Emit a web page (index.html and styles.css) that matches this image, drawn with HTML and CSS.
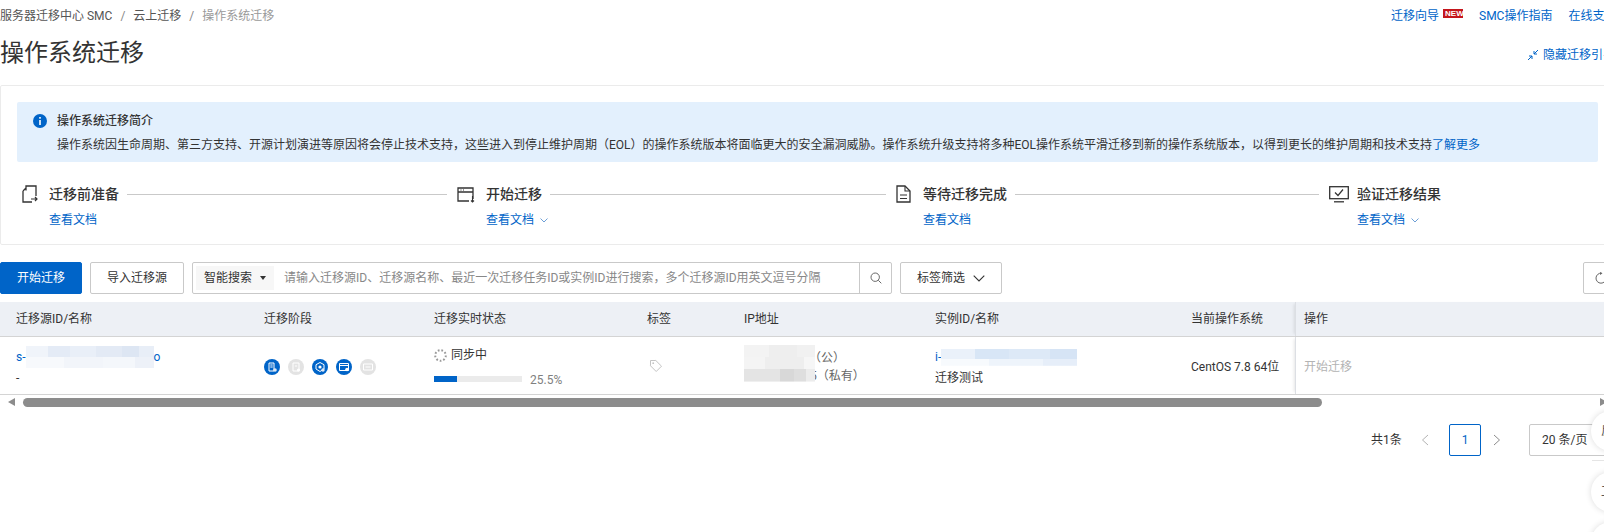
FILE: index.html
```html
<!DOCTYPE html>
<html lang="zh-CN">
<head>
<meta charset="utf-8">
<title>操作系统迁移</title>
<link rel="stylesheet" href="styles.css">
</head>
<body>
<div class="page">
  <header class="topbar">
    <nav class="crumbs"><span>服务器迁移中心 SMC</span><i>/</i><span>云上迁移</span><i>/</i><span class="cur">操作系统迁移</span></nav>
    <div class="toplinks">
      <a class="wizard">迁移向导</a><b class="new">NEW</b>
      <a class="guide">SMC操作指南</a>
      <a class="support">在线支持</a>
    </div>
  </header>
  <div class="titlebar">
    <h1>操作系统迁移</h1>
    <a class="hideguide">
      <svg class="collapse" viewBox="0 0 12 12" width="12" height="12"><path d="M1 11l4-4M2 7h3v3M11 1L7 5M7 2v3h3" fill="none" stroke="#0064c8" stroke-width="1"/></svg>隐藏迁移引导
    </a>
  </div>

  <section class="card">
    <div class="alert">
      <svg class="info" viewBox="0 0 14 14" width="14" height="14"><circle cx="7" cy="7" r="7" fill="#0064c8"/><rect x="6.2" y="6" width="1.6" height="5" fill="#fff"/><rect x="6.2" y="3" width="1.6" height="1.7" fill="#fff"/></svg>
      <div>
        <div class="alert-title">操作系统迁移简介</div>
        <p>操作系统因生命周期、第三方支持、开源计划演进等原因将会停止技术支持，这些进入到停止维护周期（EOL）的操作系统版本将面临更大的安全漏洞威胁。操作系统升级支持将多种EOL操作系统平滑迁移到新的操作系统版本，以得到更长的维护周期和技术支持<a>了解更多</a></p>
      </div>
    </div>
    <div class="steps">
      <div class="step s1">
        <div class="step-head">
          <svg class="step-icon" viewBox="0 0 16 18" width="16" height="18"><path d="M4 5.5V1h10v10M1 6l3-3M1 6v11h9" fill="none" stroke="#333" stroke-width="1.3"/><path d="M9 14h6M13 12l2 2-2 2" fill="none" stroke="#333" stroke-width="1.2"/></svg>
          <strong>迁移前准备</strong><span class="rule"></span>
        </div>
        <a class="doc">查看文档</a>
      </div>
      <div class="step s2">
        <div class="step-head">
          <svg class="step-icon" viewBox="0 0 19 17" width="19" height="17"><path d="M16 13V2H1v13h11M1 6h15" fill="none" stroke="#333" stroke-width="1.3"/><path d="M3.5 4h1M6 4h1M15.5 10v6M14 14.5l1.5 1.5 1.5-1.5" fill="none" stroke="#333" stroke-width="1.1"/></svg>
          <strong>开始迁移</strong><span class="rule"></span>
        </div>
        <a class="doc">查看文档<svg class="chev" viewBox="0 0 8 5" width="8" height="5"><path d="M.5.5L4 4 7.500.5" fill="none" stroke="#6e9fd6"/></svg></a>
      </div>
      <div class="step s3">
        <div class="step-head">
          <svg class="step-icon" viewBox="0 0 15 18" width="15" height="18"><path d="M1 1h8l5 5v11H1z" fill="none" stroke="#333" stroke-width="1.3"/><path d="M9 1v5h5M4 10h7M4 13.500h7" fill="none" stroke="#333" stroke-width="1.1"/></svg>
          <strong>等待迁移完成</strong><span class="rule"></span>
        </div>
        <a class="doc">查看文档</a>
      </div>
      <div class="step s4">
        <div class="step-head">
          <svg class="step-icon" viewBox="0 0 20 17" width="20" height="17"><rect x=".7" y=".7" width="18.600" height="12" fill="none" stroke="#333" stroke-width="1.300"/><path d="M6 6.500l3 3 5-6" fill="none" stroke="#333" stroke-width="1.200"/><path d="M5 15.800h10" stroke="#333" stroke-width="1.300"/></svg>
          <strong>验证迁移结果</strong>
        </div>
        <a class="doc">查看文档<svg class="chev" viewBox="0 0 8 5" width="8" height="5"><path d="M.5.5L4 4 7.500.5" fill="none" stroke="#6e9fd6"/></svg></a>
      </div>
    </div>
  </section>

  <div class="toolbar">
    <button class="btn primary">开始迁移</button>
    <button class="btn import">导入迁移源</button>
    <div class="search">
      <div class="scope">智能搜索<span class="caret"></span></div>
      <div class="placeholder">请输入迁移源ID、迁移源名称、最近一次迁移任务ID或实例ID进行搜索，多个迁移源ID用英文逗号分隔</div>
      <div class="search-btn"><svg viewBox="0 0 12 12" width="12" height="12"><circle cx="5.200" cy="5.200" r="4.200" fill="none" stroke="#666"/><path d="M8.300 8.300l3 3" stroke="#666"/></svg></div>
    </div>
    <button class="btn tagfilter">标签筛选<svg viewBox="0 0 12 7" width="12" height="7"><path d="M.7.700L6 6l5.300-5.300" fill="none" stroke="#333" stroke-width="1.100"/></svg></button>
    <button class="btn refresh"><svg viewBox="0 0 12 12" width="12" height="12"><path d="M6.500 1.200A5 5 0 1 0 11 6" fill="none" stroke="#666"/><path d="M5 0l2.500 1.200L5 3" fill="#666"/></svg></button>
  </div>

  <div class="table">
    <div class="tr thead">
      <div class="c c-id">迁移源ID/名称</div>
      <div class="c c-stage">迁移阶段</div>
      <div class="c c-status">迁移实时状态</div>
      <div class="c c-tag">标签</div>
      <div class="c c-ip">IP地址</div>
      <div class="c c-inst">实例ID/名称</div>
      <div class="c c-os">当前操作系统</div>
      <div class="c c-op">操作</div>
    </div>
    <div class="tr tbody">
      <div class="c c-id">
        <div class="masked"><a>s-</a><span class="mosaic m-id"></span><a>o</a></div>
        <div class="sub">-</div>
      </div>
      <div class="c c-stage">
        <div class="stages">
          <span class="stage on"><svg viewBox="0 0 16 16"><path d="M5 4h5v8H5zM6.300 6h2.400M6.300 8h2.400" fill="none" stroke="#fff"/><circle cx="11" cy="11" r="1.800" fill="#dfe9f5"/></svg></span>
          <span class="stage"><svg viewBox="0 0 16 16"><path d="M5 4h6v8H5zM6.800 7h2.400" fill="none" stroke="#fff"/><circle cx="10.500" cy="11" r="1.600" fill="#fff"/></svg></span>
          <span class="stage on"><svg viewBox="0 0 16 16"><path d="M8 3.500l4 2.200v4.300L8 12.500 4 10V5.700z" fill="none" stroke="#fff"/><circle cx="8" cy="8" r="1.600" fill="#fff"/><circle cx="11" cy="11" r="1.700" fill="#dfe9f5"/></svg></span>
          <span class="stage on"><svg viewBox="0 0 16 16"><path d="M3.500 4.500h9v7h-9zM3.500 6.500h9" fill="none" stroke="#fff"/><circle cx="11" cy="10.500" r="1.800" fill="#fff"/></svg></span>
          <span class="stage"><svg viewBox="0 0 16 16"><path d="M3.500 5h9v6h-9zM5.500 8h5" fill="none" stroke="#fff"/></svg></span>
        </div>
      </div>
      <div class="c c-status">
        <div class="sync"><svg class="spin" viewBox="0 0 13 13" width="13" height="13"><circle cx="6.500" cy="6.500" r="5.300" fill="none" stroke="#999" stroke-width="2" stroke-dasharray="1.700 1.900"/></svg>同步中</div>
        <div class="progress"><span class="track"><span class="fill"></span></span><span class="pct">25.5%</span></div>
      </div>
      <div class="c c-tag"><svg viewBox="0 0 14 14" width="14" height="14"><path d="M1.500 1.500h5.300l5.700 5.700-5.300 5.300-5.700-5.700z" fill="none" stroke="#c4c4c4"/><circle cx="4.200" cy="4.200" r=".9" fill="#c4c4c4"/></svg></div>
      <div class="c c-ip">
        <div class="ip pub">（公）</div>
        <div class="ip pri">5（私有）</div>
        <span class="mosaic m-ip"></span>
      </div>
      <div class="c c-inst">
        <div class="masked"><a>i-</a><span class="mosaic m-inst"></span></div>
        <div class="sub">迁移测试</div>
      </div>
      <div class="c c-os">CentOS 7.8 64位</div>
      <div class="c c-op"><span class="disabled">开始迁移</span></div>
    </div>
  </div>

  <div class="scrollbar">
    <span class="arrow left"></span>
    <span class="thumb"></span>
    <span class="arrow right"></span>
  </div>

  <div class="pager">
    <span class="total">共1条</span>
    <svg class="pg-arrow" viewBox="0 0 8 12" width="8" height="12"><path d="M7 1L1.500 6 7 11" fill="none" stroke="#b3b3b3"/></svg>
    <span class="pg-cur">1</span>
    <svg class="pg-arrow" viewBox="0 0 8 12" width="8" height="12"><path d="M1 1l5.500 5L1 11" fill="none" stroke="#8c8c8c"/></svg>
    <span class="pg-size">20 条/页</span>
  </div>
</div>
<div class="float f1"><span>反馈</span></div>
<div class="float f2"><span>工单</span></div>
<div class="float f3"></div>
<span class="float-rule"></span>
</body>
</html>
```
FILE: styles.css
```css
* { box-sizing: border-box; }
html, body { margin: 0; height: 532px; overflow: hidden; background: #fff; }
body {
  position: relative;
  font: 12px/18px Roboto, "Noto Sans CJK SC", sans-serif;
  color: #333;
}
a { color: #0064c8; }
.page { width: 1660px; }

.topbar { display: flex; align-items: center; height: 32px; }
.crumbs { display: flex; color: #555; }
.crumbs i { font-style: normal; color: #888; margin: 0 8px; }
.crumbs .cur { color: #999; }
.toplinks { display: flex; align-items: center; margin-left: 1391px; position: absolute; left: 0; top: 7px; white-space: nowrap; }
.toplinks .new { font: bold 8px/9px "Liberation Sans", sans-serif; color: #fff; background: #c4161c; padding: 0 2px; margin: -6px 0 0 4px; width: 20px; height: 9px; text-align: center; }
.guide { margin-left: 16px; }
.support { margin-left: 16px; }

.titlebar { display: flex; align-items: center; justify-content: space-between; margin-top: 5px; height: 32px; width: 1604px; }
h1 { margin: 0; font-size: 24px; line-height: 32px; font-weight: 400; color: #333; }
.hideguide { display: flex; align-items: center; gap: 4px; position: absolute; left: 1527px; top: 46px; white-space: nowrap; }

.card { margin-top: 16px; width: 1640px; height: 160px; border: 1px solid #ebebeb; border-radius: 2px; padding: 16px 0 0 16px; }
.alert { display: flex; gap: 10px; width: 1581px; height: 60px; background: #e3f0fd; border-radius: 2px; padding: 10px 16px; }
.alert .info { flex: none; margin-top: 2px; }
.alert-title { font-weight: 500; line-height: 18px; }
.alert p { margin: 6px 0 0; line-height: 18px; white-space: nowrap; }

.steps { display: flex; margin: 22px 0 0 5px; }
.step { flex: none; }
.s1 { width: 435px; }
.s2 { width: 439px; }
.s3 { width: 433px; }
.s4 { width: 300px; }
.step-head { display: flex; align-items: center; height: 20px; }
.step-icon { flex: none; }
.step-head strong { font-size: 14px; font-weight: 500; white-space: nowrap; color: #333; }
.s1 .step-icon { margin-right: 11px; }
.s2 .step-icon { margin-right: 10px; }
.s3 .step-icon { margin-right: 12px; }
.s4 .step-icon { margin-right: 8px; }
.rule { flex: 1; height: 1px; background: #c9c9c9; margin: 0 10px 0 8px; }
.doc { display: flex; align-items: center; gap: 6px; margin-top: 7px; }
.s1 .doc { margin-left: 27px; }
.s2 .doc { margin-left: 29px; }
.s3 .doc { margin-left: 27px; }
.s4 .doc { margin-left: 28px; }

.toolbar { display: flex; margin-top: 17px; height: 32px; }
.btn { display: flex; align-items: center; justify-content: center; height: 32px; border: 1px solid #c9c9c9; background: #fff; border-radius: 2px; font: inherit; color: #333; padding: 0; }
.primary { width: 82px; background: #0064c8; border-color: #0064c8; color: #fff; }
.import { width: 94px; margin-left: 8px; }
.search { display: flex; align-items: center; width: 700px; margin-left: 8px; border: 1px solid #c9c9c9; border-radius: 2px; padding-left: 3px; }
.scope { display: flex; align-items: center; justify-content: center; gap: 8px; width: 78px; height: 24px; background: #f7f7f7; }
.caret { border: 3.500px solid transparent; border-top: 4px solid #333; border-bottom: 0; }
.placeholder { flex: 1; padding-left: 10px; color: #888; white-space: nowrap; }
.search-btn { display: flex; align-items: center; justify-content: center; width: 32px; height: 100%; border-left: 1px solid #c9c9c9; }
.tagfilter { width: 102px; margin-left: 8px; gap: 8px; }
.refresh { width: 40px; margin-left: 581px; justify-content: flex-start; padding-left: 11px; }

.table { margin-top: 8px; width: 1640px; }
.tr { display: flex; }
.thead { height: 35px; background: #edf0f5; border-bottom: 1px solid #d4d4d4; align-items: center; }
.tbody { height: 58px; border-bottom: 1px solid #d4d4d4; align-items: stretch; }
.c { flex: none; padding-left: 16px; }
.c-id { width: 264px; }
.c-stage { width: 170px; padding-left: 0; }
.c-status { width: 213px; padding-left: 0; }
.c-tag { width: 97px; padding-left: 0; }
.c-ip { width: 191px; padding-left: 0; position: relative; }
.c-inst { width: 256px; padding-left: 0; }
.c-os { width: 104px; padding-left: 0; }
.c-op { flex: 1; padding-left: 8px; border-left: 1px solid #dcdfe4; box-shadow: -3px 0 3px -2px rgba(0,0,0,.1); }
.thead .c-op { height: 100%; display: flex; align-items: center; }

.tbody .c-id, .tbody .c-inst { padding-top: 10px; }
.masked { display: flex; align-items: center; height: 20px; color: #0064c8; }
.sub { line-height: 22px; }
.mosaic { display: block; }
.m-id {
  width: 128px; height: 22px;
  background:
    linear-gradient(90deg, #f0f4fa 0 17%, #e4ebf6 17% 34%, #e9eff8 34% 55%, #e3eaf5 55% 75%, #dde6f3 75% 88%, #e8eef7 88%) top / 100% 50% no-repeat,
    linear-gradient(90deg, #f7f9fc 0 30%, #f2f5fa 30% 60%, #f4f7fb 60% 85%, #edf1f8 85%) bottom / 100% 50% no-repeat;
}
.m-inst {
  width: 136px; height: 17px;
  background:
    linear-gradient(90deg, #eaf1fa 0 25%, #d8e6f6 25% 50%, #dde9f7 50% 80%, #d6e4f5 80%) top / 100% 60% no-repeat,
    linear-gradient(90deg, #f7fafd 0 35%, #eef4fb 35% 75%, #e6eef9 75%) bottom / 100% 40% no-repeat;
}
.m-ip {
  position: absolute; left: 0; top: 8px; width: 71px; height: 37px;
  background:
    linear-gradient(90deg, #f3f3f3 0 35%, #eeeeee 35% 75%, #f1f1f1 75%) top / 100% 33% no-repeat,
    linear-gradient(90deg, #f4f4f4 0 30%, #eeeeee 30% 85%, #f6f6f6 85%) center / 100% 33% no-repeat,
    linear-gradient(90deg, #e4e4e4 0 50%, #d8d8d8 50% 70%, #dedede 70% 88%, #ececec 88%) bottom / 100% 34% no-repeat;
}
.ip { position: absolute; white-space: nowrap; color: #666; }
.pub { top: 12px; left: 65px; }
.pri { top: 30px; left: 66px; }

.stages { display: flex; gap: 8px; margin: 22px 0 0; }
.stage { display: block; width: 16px; height: 16px; border-radius: 50%; background: #e3e3e3; }
.stage.on { background: #0064c8; }
.stage svg { display: block; width: 16px; height: 16px; }

.sync { display: flex; align-items: center; gap: 4px; margin-top: 9px; height: 18px; }
.spin { flex: none; }
.progress { display: flex; align-items: center; gap: 8px; margin-top: 7px; height: 16px; }
.track { display: block; width: 88px; height: 6px; background: #ebebeb; }
.fill { display: block; width: 26%; height: 100%; background: #0064c8; }
.pct { color: #808080; margin-top: 2px; }

.c-tag svg { display: block; margin: 22px 0 0 2px; }
.tbody .c-os, .tbody .c-op { display: flex; align-items: center; white-space: nowrap; padding-top: 2px; }
.disabled { color: #b3b3b3; }

.scrollbar { position: relative; height: 15px; width: 1604px; }
.thumb { position: absolute; left: 23px; top: 3px; width: 1299px; height: 9px; background: #8c8c8c; border-radius: 4.500px; }
.arrow { position: absolute; top: 3px; border: 4.500px solid transparent; }
.arrow.left { left: 8px; border-left: 0; border-right: 7px solid #8c8c8c; }
.arrow.right { left: 1600px; border-right: 0; border-left: 7px solid #8c8c8c; }

.pager { display: flex; align-items: center; margin: 14px 0 0 1371px; height: 32px; }
.total { width: 50px; }
.pg-cur { display: flex; align-items: center; justify-content: center; width: 32px; height: 32px; border: 1px solid #0064c8; border-radius: 2px; color: #0064c8; margin: 0 12px 0 20px; }
.pg-size { display: flex; align-items: center; width: 90px; height: 32px; border: 1px solid #c9c9c9; border-radius: 2px; padding-left: 12px; margin-left: 28px; }

.float { position: absolute; left: 1591px; width: 40px; height: 40px; border-radius: 50%; background: #fff; box-shadow: 0 0 6px rgba(0,0,0,.14); overflow: hidden; }
.float span { display: block; padding: 11px 0 0 10px; font-size: 12px; color: #555; white-space: nowrap; }
.f1 { top: 411px; }
.f2 { top: 472px; }
.f3 { top: 522px; }
.float-rule { position: absolute; left: 1592px; top: 460px; width: 12px; height: 1px; background: #e5e5e5; }
```
